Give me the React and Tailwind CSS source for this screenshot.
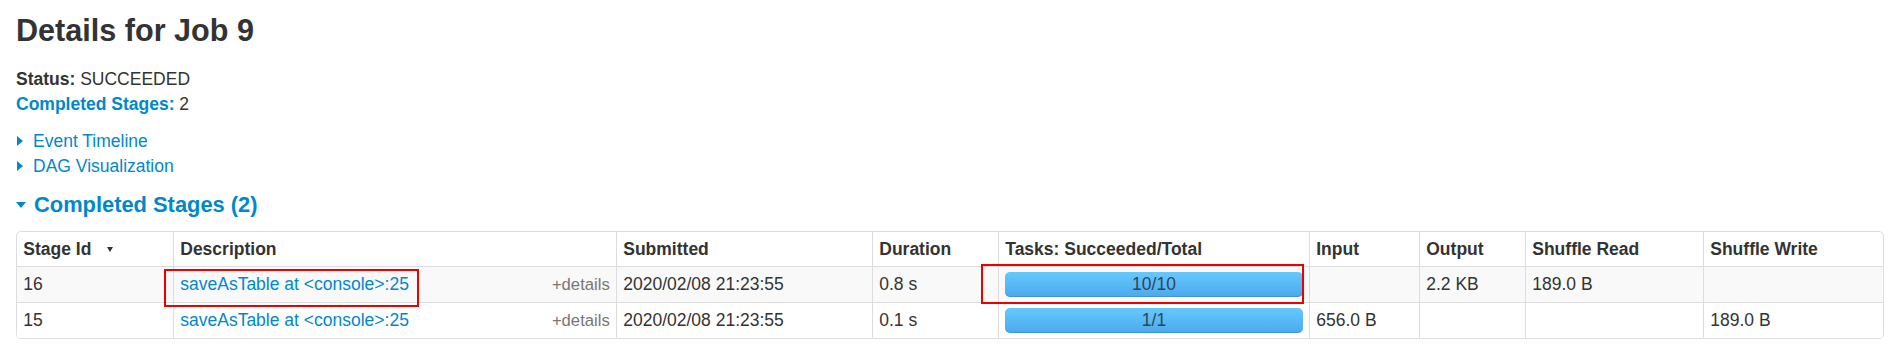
const columns = [
  'Stage Id',
  'Description',
  'Submitted',
  'Duration',
  'Tasks: Succeeded/Total',
  'Input',
  'Output',
  'Shuffle Read',
  'Shuffle Write',
];

const stages = [
  { id: '16', desc: 'saveAsTable at <console>:25', submitted: '2020/02/08 21:23:55', duration: '0.8 s', tasks: '10/10', input: '', output: '2.2 KB', shuffleRead: '189.0 B', shuffleWrite: '' },
  { id: '15', desc: 'saveAsTable at <console>:25', submitted: '2020/02/08 21:23:55', duration: '0.1 s', tasks: '1/1', input: '656.0 B', output: '', shuffleRead: '', shuffleWrite: '189.0 B' },
];

const grid = 'grid grid-cols-[156px_443px_256px_126px_311px_110px_106px_178px_180px]';
const cell = 'px-[6.25px] leading-[25px] border-[#dddddd] min-w-0 whitespace-nowrap overflow-hidden';

function RightArrow() {
  return <span className="inline-block w-0 h-0 border-y-[5px] border-y-transparent border-l-[6px] border-l-[#0088cc] mr-[10px] ml-[1px] align-[1px]" />;
}

function ProgressBar({ label }) {
  return (
    <div className="h-[25px] rounded-[5px] bg-gradient-to-b from-[#66c9fd] to-[#4aa9ee] shadow-[inset_0_-1px_0_rgba(0,0,0,0.12)] text-center text-[#334455] leading-[25px]">
      {label}
    </div>
  );
}

export default function App() {
  return (
    <div className="px-[16px] pt-[5px] pb-[16px] text-[17.5px] text-[#333333] bg-white" style={{ fontFamily: '"Liberation Sans", Arial, sans-serif' }}>
      <h3 className="text-[30.6px] leading-[50px] font-bold">Details for Job 9</h3>

      <ul className="mt-[12.4px] leading-[25px]">
        <li><strong>Status:</strong> SUCCEEDED</li>
        <li><a className="text-[#0088cc]"><strong>Completed Stages:</strong></a> 2</li>
      </ul>

      <div className="mt-[11.6px] leading-[25px] text-[#0088cc]">
        <div><RightArrow />Event Timeline</div>
        <div><RightArrow />DAG Visualization</div>
      </div>

      {/* ── Completed Stages ── */}
      <h4 className="mt-[13px] text-[21.875px] leading-[25px] font-bold text-[#0088cc] flex items-center">
        <span className="inline-block w-0 h-0 border-x-[5px] border-x-transparent border-t-[6px] border-t-[#0088cc] mr-[8px] mt-[2px]" />
        Completed Stages (2)
      </h4>

      <div className="relative mt-[14px] w-[1868px]">
        <div className="border border-[#dddddd] rounded-[5px] overflow-hidden">
          <div className={`${grid} font-bold`}>
            {columns.map((c, i) => (
              <div key={c} className={`${cell} pt-[5px] pb-[4px] ${i ? 'border-l' : ''}`}>
                {c}
                {i === 0 && (
                  <span className="inline-block w-0 h-0 border-x-[3px] border-x-transparent border-t-[5px] border-t-[#333333] ml-[16px] align-[3px]" />
                )}
              </div>
            ))}
          </div>

          {stages.map((s, r) => (
            <div key={s.id} className={`${grid} ${r === 0 ? 'bg-[#f9f9f9]' : 'bg-white'}`}>
              <div className={`${cell} py-[5px] border-t`}>{s.id}</div>
              <div className={`${cell} py-[5px] border-t border-l flex justify-between items-baseline`}>
                <a className="text-[#0088cc]">{s.desc}</a>
                <span className="text-[16.67px] text-[#777777]">+details</span>
              </div>
              <div className={`${cell} py-[5px] border-t border-l`}>{s.submitted}</div>
              <div className={`${cell} py-[5px] border-t border-l`}>{s.duration}</div>
              <div className={`${cell} py-[5px] border-t border-l`}><ProgressBar label={s.tasks} /></div>
              <div className={`${cell} py-[5px] border-t border-l`}>{s.input}</div>
              <div className={`${cell} py-[5px] border-t border-l`}>{s.output}</div>
              <div className={`${cell} py-[5px] border-t border-l`}>{s.shuffleRead}</div>
              <div className={`${cell} py-[5px] border-t border-l`}>{s.shuffleWrite}</div>
            </div>
          ))}
        </div>

        {/* ── annotation boxes ── */}
        <div className="absolute left-[148px] top-[38px] w-[255px] h-[38px] border-2 border-[#ee0000] pointer-events-none" />
        <div className="absolute left-[965px] top-[33px] w-[323px] h-[40px] border-2 border-[#ee0000] pointer-events-none" />
      </div>
    </div>
  );
}
